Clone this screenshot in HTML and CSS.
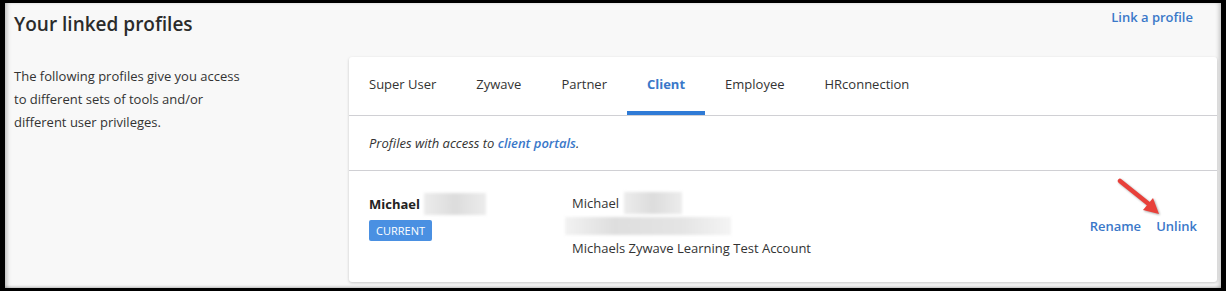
FILE: index.html
```html
<!DOCTYPE html>
<html lang="en">
<head>
    <meta charset="UTF-8">
    <title>Linked profiles</title>
    <link rel="stylesheet" href="styles.css">
</head>
<body>
    <div class="screen">

        <!-- Header -->
        <header class="page-head">
            <h1>Your linked profiles</h1>
            <a href="#" class="link-profile">Link a profile</a>
        </header>

        <div class="content">
            <p class="intro">The following profiles give you access to different sets of tools and/or different user privileges.</p>

            <!-- Profiles card -->
            <section class="card">
                <nav class="tabs">
                    <a href="#" class="tab">Super User</a>
                    <a href="#" class="tab">Zywave</a>
                    <a href="#" class="tab">Partner</a>
                    <a href="#" class="tab active">Client</a>
                    <a href="#" class="tab">Employee</a>
                    <a href="#" class="tab">HRconnection</a>
                </nav>

                <div class="tab-note">
                    <span>Profiles with access to <a href="#">client portals</a>.</span>
                </div>

                <div class="profile">
                    <div class="profile-name">
                        <div class="name-line"><strong>Michael</strong><span class="blur blur-name"></span></div>
                        <span class="badge">CURRENT</span>
                    </div>
                    <div class="profile-info">
                        <div class="name-line">Michael<span class="blur blur-last"></span></div>
                        <div class="blur blur-email"></div>
                        <div>Michaels Zywave Learning Test Account</div>
                    </div>
                    <div class="profile-actions">
                        <a href="#">Rename</a>
                        <a href="#">Unlink</a>
                    </div>
                </div>
            </section>
        </div>

        <!-- Callout arrow -->
        <svg class="callout" width="60" height="50" viewBox="0 0 60 50">
            <line x1="4" y1="4" x2="34" y2="28" stroke="#e8403a" stroke-width="4.5" stroke-linecap="round"/>
            <polygon points="43,37 27,33 37,21" fill="#e8403a"/>
        </svg>
    </div>
</body>
</html>
```

FILE: styles.css
```css
/* General */
body {
    margin: 0;
    background: #000;
    font-family: "Open Sans", Arial, sans-serif;
    font-size: 13px;
    color: #333;
}

a {
    color: #3a78c9;
    text-decoration: none;
    font-weight: 600;
}

.screen {
    position: relative;
    height: 285px;
    margin: 3px 5px 3px 5px;
    background: #f8f8f8;
    box-shadow: inset 4px 0 4px -2px rgba(0, 0, 0, 0.25), inset -4px 0 4px -2px rgba(0, 0, 0, 0.2), inset 0 -3px 3px -2px rgba(0, 0, 0, 0.2);
    overflow: hidden;
}

/* Header */
.page-head {
    display: flex;
    justify-content: space-between;
    align-items: flex-start;
    padding: 8px 28px 0 9px;
    height: 46px;
}

.page-head h1 {
    margin: 0;
    font-size: 19px;
    font-weight: 600;
    color: #2b2b2b;
}

.link-profile {
    margin-top: -3px;
    font-size: 13px;
}

/* Content */
.content {
    display: flex;
}

.intro {
    width: 236px;
    margin: 8px 0 0 9px;
    line-height: 23px;
    color: #333;
}

.card {
    width: 868px;
    margin-left: 99px;
    background: #fff;
    border-radius: 3px;
    box-shadow: 0 1px 3px rgba(0, 0, 0, 0.2);
}

/* Tabs */
.tabs {
    display: flex;
    height: 58px;
    border-bottom: 1px solid #d0d0d4;
}

.tab {
    display: flex;
    align-items: center;
    padding: 0 20px;
    color: #333;
    font-weight: 400;
    border-bottom: 4px solid transparent;
}

.tab.active {
    color: #3a78c9;
    font-weight: 700;
    border-bottom-color: #2f7bd6;
}

.tab-note {
    height: 54px;
    display: flex;
    align-items: center;
    padding-left: 20px;
    font-style: italic;
    border-bottom: 1px solid #d0d0d4;
}

/* Profile row */
.profile {
    display: flex;
    align-items: center;
    height: 111px;
    padding: 0 20px;
}

.name-line {
    display: flex;
    align-items: center;
}

.profile-name {
    width: 202px;
    margin-top: -20px;
}

.profile-name strong {
    color: #222;
}

.blur {
    display: inline-block;
    background: linear-gradient(90deg, #ececec, #dcdcdc, #ececec);
    filter: blur(1.5px);
}

.blur-name {
    width: 62px;
    height: 22px;
    margin-left: 4px;
}

.blur-last {
    width: 58px;
    height: 22px;
    margin-left: 5px;
}

.blur-email {
    display: block;
    width: 166px;
    height: 18px;
    margin: 3px 0 3px -7px;
    background: linear-gradient(90deg, #f2f2f2, #dedede 30%, #e4e4e4 70%, #f4f4f4);
}

.badge {
    display: inline-block;
    margin-top: 5px;
    padding: 3px 7px;
    background: #4a90e2;
    color: #fff;
    font-size: 11px;
    border-radius: 2px;
}

.profile-info {
    flex: 1;
    margin-top: -4px;
    padding-left: 1px;
    line-height: 20px;
}

.profile-actions {
    display: flex;
    gap: 15px;
    margin-top: -2px;
}

/* Callout */
.callout {
    position: absolute;
    left: 1111px;
    top: 174px;
    filter: drop-shadow(1px 1px 1px rgba(0, 0, 0, 0.35));
}
```
